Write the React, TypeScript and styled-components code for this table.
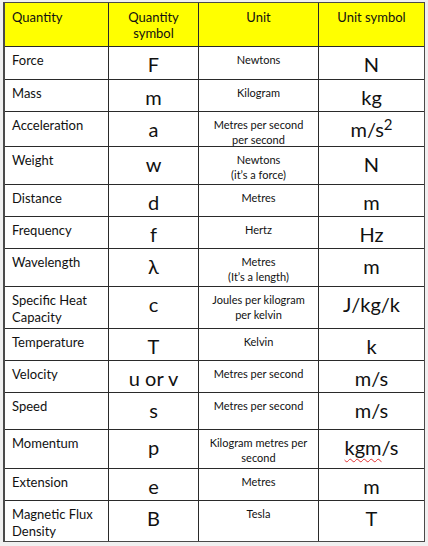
import React from 'react'
import styled, { createGlobalStyle } from 'styled-components'

const GlobalStyle = createGlobalStyle`
  * { box-sizing: border-box; }
  body {
    margin: 0;
    background: #f0f0f0;
    font-family: Lato, "Noto Sans", "DejaVu Sans", sans-serif;
  }
`

const Sup = styled.span`
  font-size: 15px;
  vertical-align: 7px;
  line-height: 0;
`

const Misspelt = styled.span`
  text-decoration: underline wavy #e03030;
  text-decoration-thickness: 1px;
  text-underline-offset: 3px;
  text-decoration-skip-ink: none;
`

const Page = styled.div`
  width: 428px;
  height: 546px;
  padding: 2px 0 0 3px;
`

const Table = styled.div`
  width: 422px;
  background: #fff;
  border: 1px solid #4a4a4a;
  border-left-width: 2px;
  color: #111;
`

const TableRow = styled.div<{ $h: number }>`
  display: grid;
  grid-template-columns: 103px 90px 120px 1fr;
  height: ${p => p.$h}px;
  border-bottom: 1px solid #2a2a2a;
  &:last-child {
    border-bottom: none;
  }
  & > * + * {
    border-left: 1px solid #2a2a2a;
  }
`

const HeadCell = styled.div<{ $align: 'left' | 'center' }>`
  background: #ffff00;
  text-align: ${p => p.$align};
  font-size: 13px;
  line-height: 16px;
  padding: 6px 7px 0;
`

const NameCell = styled.div`
  font-size: 13px;
  line-height: 17px;
  padding: 5px 7px 0;
`

const SymbolCell = styled.div`
  font-size: 20px;
  line-height: 24px;
  text-align: center;
  padding-top: 5px;
  white-space: nowrap;
`

const UnitCell = styled.div`
  font-size: 11px;
  line-height: 15px;
  text-align: center;
  padding-top: 5px;
`

type Row = {
  name: string[]
  symbol: React.ReactNode
  unit: string[]
  unitSymbol: React.ReactNode
  h: number
}

const rows: Row[] = [
  { name: ['Force'], symbol: 'F', unit: ['Newtons'], unitSymbol: 'N', h: 33 },
  { name: ['Mass'], symbol: 'm', unit: ['Kilogram'], unitSymbol: 'kg', h: 32 },
  {
    name: ['Acceleration'],
    symbol: 'a',
    unit: ['Metres per second', 'per second'],
    unitSymbol: (
      <>
        m/s<Sup>2</Sup>
      </>
    ),
    h: 35,
  },
  { name: ['Weight'], symbol: 'w', unit: ['Newtons', '(it’s a force)'], unitSymbol: 'N', h: 38 },
  { name: ['Distance'], symbol: 'd', unit: ['Metres'], unitSymbol: 'm', h: 32 },
  { name: ['Frequency'], symbol: 'f', unit: ['Hertz'], unitSymbol: 'Hz', h: 32 },
  { name: ['Wavelength'], symbol: 'λ', unit: ['Metres', '(It’s a length)'], unitSymbol: 'm', h: 38 },
  {
    name: ['Specific Heat', 'Capacity'],
    symbol: 'c',
    unit: ['Joules per kilogram', 'per kelvin'],
    unitSymbol: 'J/kg/k',
    h: 42,
  },
  { name: ['Temperature'], symbol: 'T', unit: ['Kelvin'], unitSymbol: 'k', h: 32 },
  { name: ['Velocity'], symbol: 'u or v', unit: ['Metres per second'], unitSymbol: 'm/s', h: 32 },
  { name: ['Speed'], symbol: 's', unit: ['Metres per second'], unitSymbol: 'm/s', h: 37 },
  {
    name: ['Momentum'],
    symbol: 'p',
    unit: ['Kilogram metres per', 'second'],
    unitSymbol: (
      <>
        <Misspelt>kgm</Misspelt>/s
      </>
    ),
    h: 39,
  },
  { name: ['Extension'], symbol: 'e', unit: ['Metres'], unitSymbol: 'm', h: 32 },
  { name: ['Magnetic Flux', 'Density'], symbol: 'B', unit: ['Tesla'], unitSymbol: 'T', h: 40 },
]

const lines = (parts: string[]) =>
  parts.map((p, i) => (
    <React.Fragment key={i}>
      {i > 0 && <br />}
      {p}
    </React.Fragment>
  ))

const App = () => {
  return (
    <>
      <GlobalStyle />
      <Page>
        <Table>
          <TableRow $h={44}>
            <HeadCell $align="left">Quantity</HeadCell>
            <HeadCell $align="center">
              Quantity
              <br />
              symbol
            </HeadCell>
            <HeadCell $align="center">Unit</HeadCell>
            <HeadCell $align="center">Unit symbol</HeadCell>
          </TableRow>
          {rows.map((r, i) => (
            <TableRow key={i} $h={r.h}>
              <NameCell>{lines(r.name)}</NameCell>
              <SymbolCell>{r.symbol}</SymbolCell>
              <UnitCell>{lines(r.unit)}</UnitCell>
              <SymbolCell>{r.unitSymbol}</SymbolCell>
            </TableRow>
          ))}
        </Table>
      </Page>
    </>
  )
}

export default App
